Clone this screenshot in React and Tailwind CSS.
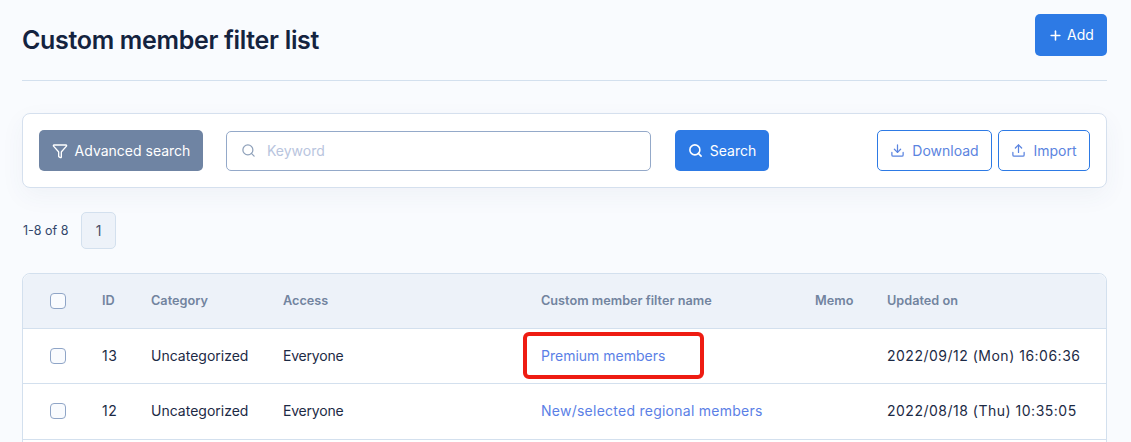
import React from "react";
import { Filter, Search, Download, Upload, Plus } from "lucide-react";

const rows = [
  { id: 13, name: "Premium members", nameClass: "", height: "h-[55px]", updated: "2022/09/12 (Mon) 16:06:36", marked: true },
  { id: 12, name: "New/selected regional members", nameClass: "tracking-[0.25px]", height: "h-[56px] pb-px", updated: "2022/08/18 (Thu) 10:35:05" },
];

const cols = "grid grid-cols-[79px_49px_132px_258px_274px_72px_1fr] items-center";

function Checkbox() {
  return <span className="block w-4 h-4 rounded-[4px] border border-[#8fa5c7] bg-[#f9fbfe]" />;
}

export default function App() {
  return (
    <div className="h-[442px] overflow-hidden bg-[#f9fbfe] pl-[22px] pr-[24px] text-[#1c2a45] font-['Inter',sans-serif]">
      {/* ================= HEADER ================= */}
      <div className="flex items-start justify-between h-[81px] pt-[14px] border-b border-[#d3e0ee]">
        <h1 className="text-[25px] leading-[52px] font-semibold text-[#14233f] tracking-[-0.32px]">
          Custom member filter list
        </h1>
        <button className="flex items-center justify-center gap-1 w-[72px] h-[42px] rounded-[5px] bg-[#2d7ae5] text-white text-sm">
          <Plus size={15} strokeWidth={2.5} />
          Add
        </button>
      </div>

      {/* ================= SEARCH ================= */}
      <div className="flex items-center mt-[32px] h-[75px] px-4 bg-white border border-[#d5e0ee] rounded-lg shadow-[0_8px_24px_rgba(60,80,120,0.05)]">
        <button className="flex items-center justify-center gap-[7px] w-[164px] h-[41px] rounded-[5px] bg-[#6f84a3] text-white text-sm">
          <Filter size={16} />
          Advanced search
        </button>
        <div className="flex items-center w-[425px] h-[40px] ml-[23px] pl-[14px] rounded-[5px] border border-[#94a9c9] bg-white text-sm text-[#b9c5de]">
          <Search size={15} className="text-[#8fa1ba]" />
          <span className="ml-[11px]">Keyword</span>
        </div>
        <button className="flex items-center justify-center gap-[7px] w-[94px] h-[41px] ml-[24px] rounded-[5px] bg-[#2d7ae5] text-white text-sm">
          <Search size={15} strokeWidth={2.5} />
          Search
        </button>
        <div className="flex gap-[6px] ml-auto">
          <button className="flex items-center justify-center gap-[7px] w-[115px] h-[41px] rounded-[5px] border border-[#2d7ae5] bg-white text-sm text-[#5b84e0]">
            <Download size={15} />
            Download
          </button>
          <button className="flex items-center justify-center gap-[7px] w-[92px] h-[41px] rounded-[5px] border border-[#2d7ae5] bg-white text-sm text-[#5b84e0]">
            <Upload size={15} />
            Import
          </button>
        </div>
      </div>

      {/* ================= PAGINATION ================= */}
      <div className="flex items-center mt-[24px] h-[37px] text-[12.5px]">
        <span className="w-[59px] pl-px pt-px text-[#33466b]">1-8 of 8</span>
        <span className="flex items-center justify-center w-[35px] h-[37px] rounded-[5px] border border-[#d3e0ee] bg-[#edf2f9] text-sm text-[#4a4f68]">
          1
        </span>
      </div>

      {/* ================= TABLE ================= */}
      <div className="mt-[24px] bg-white border border-[#d3e0ee] rounded-lg text-sm">
        <div className={`${cols} h-[55px] bg-[#edf2f9] rounded-t-lg border-b border-[#d3e0ee] text-[12.7px] leading-[18px] font-semibold text-[#72849f]`}>
          <div className="pl-[27px]">
            <Checkbox />
          </div>
          <div>ID</div>
          <div>Category</div>
          <div>Access</div>
          <div>Custom member filter name</div>
          <div>Memo</div>
          <div>Updated on</div>
        </div>
        {rows.map((row) => (
          <div key={row.id} className={`${cols} ${row.height} border-b border-[#d3e0ee]`}>
            <div className="pl-[27px]">
              <Checkbox />
            </div>
            <div className="tracking-[0.5px]">{row.id}</div>
            <div>Uncategorized</div>
            <div className="tracking-[-0.2px]">Everyone</div>
            <div className={`relative text-[#5b7fe6] whitespace-nowrap ${row.nameClass}`}>
              {row.name}
              {row.marked && (
                <span className="absolute left-[-18px] top-[-14px] w-[181px] h-[47px] border-4 border-[#ee1c12] rounded-[6px]" />
              )}
            </div>
            <div />
            <div className="whitespace-nowrap tracking-[0.5px]">{row.updated}</div>
          </div>
        ))}
        <div className="h-[40px]" />
      </div>
    </div>
  );
}
